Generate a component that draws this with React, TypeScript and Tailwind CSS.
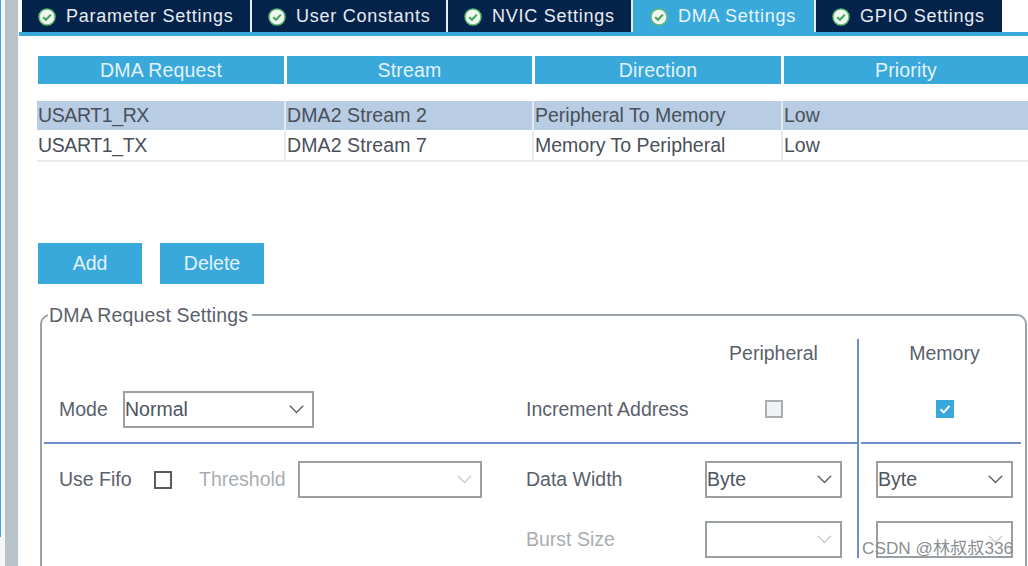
const font = 'font-["Liberation_Sans","Noto_Sans_CJK_SC",sans-serif]';

const tabs = [
    {label: 'Parameter Settings', width: 'w-[230px]', pad: 'pl-[16px]'},
    {label: 'User Constants', width: 'w-[196px]', pad: 'pl-[16px]'},
    {label: 'NVIC Settings', width: 'w-[185px]', pad: 'pl-[16px]'},
    {label: 'DMA Settings', width: 'w-[183px]', pad: 'pl-[17px]', active: true},
    {label: 'GPIO Settings', width: 'w-[186px]', pad: 'pl-[16px]', last: true}
];

const rows = [
    {request: 'USART1_RX', stream: 'DMA2 Stream 2', direction: 'Peripheral To Memory', priority: 'Low', selected: true},
    {request: 'USART1_TX', stream: 'DMA2 Stream 7', direction: 'Memory To Peripheral', priority: 'Low', selected: false}
];

function TabCheck() {
    return (
        <svg width="18" height="18" viewBox="0 0 18 18" className="shrink-0">
            <circle cx="9" cy="9" r="8" fill="#eef6ef" stroke="#63b874" strokeWidth="1.5"/>
            <path d="M5.2 9.2 L8 11.8 L12.8 6.6" fill="none" stroke="#3fa653" strokeWidth="2"/>
        </svg>
    );
}

function Chevron({disabled}: {disabled?: boolean}) {
    return (
        <svg width="15" height="9" viewBox="0 0 15 9" className="shrink-0">
            <path d="M0.8 0.8 L7.5 7.5 L14.2 0.8" fill="none" stroke={disabled ? '#c9ced2' : '#5f666c'} strokeWidth="1.5"/>
        </svg>
    );
}

function Select({value, width, disabled}: {value?: string; width: string; disabled?: boolean}) {
    return (
        <div className={`flex h-[37px] items-center justify-between border-2 border-[#9a9fa4] bg-white pr-[8px] text-[#4d5560] ${width}`}>
            <span>{value}</span>
            <Chevron disabled={disabled}/>
        </div>
    );
}

export default function App() {
    return (
        <div className={`flex h-[566px] w-[1028px] overflow-hidden bg-white text-[19.5px] ${font}`}>
            <div className="flex w-[19px] shrink-0 bg-[#f4f6f8]">
                <div className="h-[537px] w-[1px] bg-[#39a9dc]"/>
                <div className="ml-[4px] w-[13px] bg-[#b7c3c9]"/>
            </div>
            <div className="w-[1009px]">
                <div className="flex h-[32px] pl-[3px] text-[18px] tracking-[0.75px]">
                    {tabs.map((tab) => (
                        <div key={tab.label}
                             className={`flex items-center gap-[10px] pt-[1px] ${tab.last ? '' : 'border-r-2 border-[#e6edf2]'} ${tab.pad} ${tab.width} ${tab.active ? 'bg-[#39a9dc] text-[#e9f5fb]' : 'bg-[#03234b] text-[#e8ecf0]'}`}>
                            <TabCheck/>
                            <span className="whitespace-nowrap">{tab.label}</span>
                        </div>
                    ))}
                </div>
                <div className="h-[4px] bg-[#39a9dc]"/>
                <div className="pl-[19px] pt-[20px]">
                    <div className="grid h-[28px] grid-cols-[246px_245px_246px_1fr] gap-x-[3px] text-center leading-[28px] tracking-[0.15px] text-[#e3f2fa]">
                        <div className="bg-[#39a9dc]">DMA Request</div>
                        <div className="bg-[#39a9dc]">Stream</div>
                        <div className="bg-[#39a9dc]">Direction</div>
                        <div className="bg-[#39a9dc]">Priority</div>
                    </div>
                    <div className="-ml-[1px] mt-[17px] border-b-2 border-[#e6e9ee] text-[#4a4f5a]">
                        {rows.map((row) => (
                            <div key={row.request}
                                 className={`grid h-[29px] grid-cols-[249px_248px_249px_1fr] leading-[29px] ${row.selected ? 'mb-[1px] bg-[#b8cde4]' : ''}`}>
                                <div className="border-r-2 border-[#e6e9ee] pl-[1px] tracking-[-0.4px]">{row.request}</div>
                                <div className="border-r-2 border-[#e6e9ee] pl-[1px] tracking-[0.1px]">{row.stream}</div>
                                <div className="border-r-2 border-[#e6e9ee] pl-[1px]">{row.direction}</div>
                                <div className="pl-[1px]">{row.priority}</div>
                            </div>
                        ))}
                    </div>
                    <div className="mt-[81px] flex gap-[18px] text-[#e3f2fa]">
                        <div className="flex h-[41px] w-[104px] items-center justify-center bg-[#39a9dc]">Add</div>
                        <div className="flex h-[41px] w-[104px] items-center justify-center bg-[#39a9dc]">Delete</div>
                    </div>
                </div>
                <fieldset className="relative ml-[21px] mt-[21px] h-[300px] w-[987px] rounded-[10px] border-2 border-[#9aa3a8] text-[#5a616b]">
                    <legend className="ml-[6px] pl-[1px] pr-[4px] leading-[20px] tracking-[0.15px]">DMA Request Settings</legend>
                    <div className="ml-[2px] mt-[14px] flex">
                        <div className="w-[815px] border-r-2 border-[#6f8fc9]">
                            <div className="grid grid-cols-[482px_179px_137px] pb-[14px]">
                                <div className="col-start-3 mb-[22px] flex h-[30px] items-center justify-center">Peripheral</div>
                                <div className="flex items-center pl-[15px]">
                                    <span className="w-[64px]">Mode</span>
                                    <Select value="Normal" width="w-[191px]"/>
                                </div>
                                <div className="flex items-center">Increment Address</div>
                                <div className="flex items-center justify-center">
                                    <div className="mb-[2px] h-[18px] w-[18px] border-2 border-[#a9aeb2] bg-[#f0f2f5]"/>
                                </div>
                            </div>
                            <div className="grid grid-cols-[482px_179px_137px] gap-y-[23px] border-t-2 border-[#6f8fc9] pt-[17px]">
                                <div className="flex items-center pl-[15px]">
                                    <span className="w-[95px]">Use Fifo</span>
                                    <div className="h-[18px] w-[18px] border-2 border-[#555b60] bg-white"/>
                                    <span className="ml-[27px] w-[99px] text-[#a9adb2]">Threshold</span>
                                    <Select width="w-[184px]" disabled/>
                                </div>
                                <div className="flex items-center">Data Width</div>
                                <Select value="Byte" width="w-[137px]"/>
                                <div/>
                                <div className="flex items-center text-[#a9adb2]">Burst Size</div>
                                <Select width="w-[137px]" disabled/>
                            </div>
                        </div>
                        <div className="w-[162px]">
                            <div className="pb-[14px]">
                                <div className="mb-[22px] flex h-[30px] items-center justify-center pl-[9px]">Memory</div>
                                <div className="flex h-[37px] items-center justify-center pl-[9px]">
                                    <div className="mb-[2px] flex h-[18px] w-[18px] items-center justify-center bg-[#39a9dc]">
                                        <svg width="14" height="14" viewBox="0 0 14 14">
                                            <path d="M2.5 7.2 L5.8 10.4 L11.5 3.8" fill="none" stroke="#fff" strokeWidth="2"/>
                                        </svg>
                                    </div>
                                </div>
                            </div>
                            <div className="ml-[2px] border-t-2 border-[#6f8fc9] pl-[15px] pt-[17px]">
                                <div className="flex flex-col gap-y-[23px]">
                                    <Select value="Byte" width="w-[137px]"/>
                                    <Select width="w-[137px]" disabled/>
                                </div>
                            </div>
                        </div>
                    </div>
                    <span className="absolute left-[820px] top-[211px] whitespace-nowrap text-[17.2px] text-[#8b8f94]">CSDN @林叔叔336</span>
                </fieldset>
            </div>
        </div>
    );
}
